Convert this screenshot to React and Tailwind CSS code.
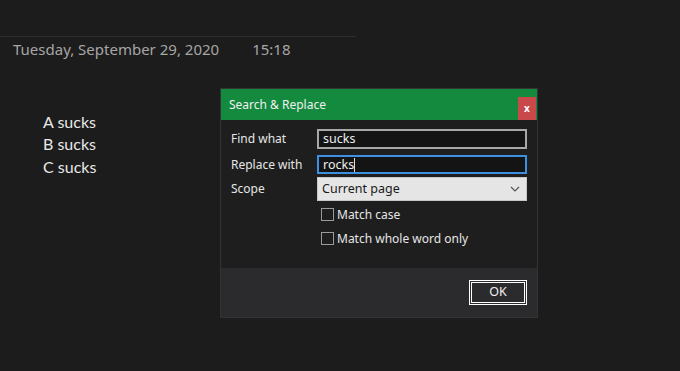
import React from 'react';

const ui = { fontFamily: '"Noto Sans", "Open Sans", sans-serif' };

function Check({ label }) {
  return (
    <label className="flex items-center h-[13px] gap-[3px] text-[12px] text-[#e6e6e6]">
      <span className="w-[13px] h-[13px] border border-[#9a9a9a] bg-[#1e1e1e]" />
      {label}
    </label>
  );
}

function Row({ label, children, className = '' }) {
  return (
    <div className={`flex items-center ${className}`}>
      <div className="w-[86px] text-[12px] text-[#e6e6e6]">{label}</div>
      {children}
    </div>
  );
}

const SearchDialog = () => (
  <div className="absolute left-[220px] top-[88px] w-[318px] h-[230px] border border-[#333333] bg-[#1e1e1e] flex flex-col" style={ui}>
    <div className="h-[31px] bg-[#138a3e] flex items-center justify-between pl-[8px] pr-[1px]">
      <span className="text-[12px] text-[#f0f0f0]">Search &amp; Replace</span>
      <button className="w-[18px] h-[23px] mt-[7px] bg-[#c9494b] text-white text-[10px] font-bold leading-none">x</button>
    </div>
    <div className="flex-1 flex flex-col pl-[10px] pr-[10px] pt-[9px]">
      <Row label="Find what">
        <div className="w-[210px] h-[20px] border-2 border-[#a8a8a8] bg-[#141414] text-[12.5px] text-[#eeeeee] leading-[16px] pl-[4px]">sucks</div>
      </Row>
      <Row label="Replace with" className="mt-[6px]">
        <div className="w-[210px] h-[19px] border-2 border-[#3d8fe0] bg-[#141414] text-[12.5px] text-[#eeeeee] leading-[15px] pl-[4px] flex items-center">
          rocks<span className="w-px h-[14px] bg-[#dddddd]" />
        </div>
      </Row>
      <Row label="Scope" className="mt-[3px]">
        <div className="w-[210px] h-[24px] border border-[#c8c8c8] bg-[#e5e5e5] text-[12.5px] text-[#1a1a1a] pl-[4px] pr-[6px] flex items-center justify-between">
          Current page
          <svg width="10" height="6" viewBox="0 0 10 6"><path d="M1 1l4 4 4-4" fill="none" stroke="#555" strokeWidth="1.2" /></svg>
        </div>
      </Row>
      <div className="pl-[90px] flex flex-col gap-[11px] pt-[7px]">
        <Check label="Match case" />
        <Check label="Match whole word only" />
      </div>
    </div>
    <div className="h-[49px] bg-[#2b2b2d] flex items-start justify-end pt-[12px] pr-[10px]">
      <button className="w-[58px] h-[25px] border border-white bg-[#2b2b2d] shadow-[inset_0_0_0_1px_#2b2b2d,inset_0_0_0_2px_#ffffff] text-[12.5px] text-[#eeeeee]">OK</button>
    </div>
  </div>
);

export default function App() {
  return (
    <div className="relative w-[680px] h-[371px] bg-[#1c1c1c] overflow-hidden">
      <div className="w-[356px] h-[37px] border-b border-[#2f2f2f]" />
      <div className="flex gap-[33px] pl-[13px] pt-[1px] text-[15px] text-[#a6a6a6]" style={ui}>
        <span>Tuesday, September 29, 2020</span>
        <span>15:18</span>
      </div>
      <div className="pl-[43px] pt-[50px] flex flex-col text-[16px] leading-[22.5px] text-[#e8e8e8]" style={{ fontFamily: 'Lato, "Noto Sans", sans-serif' }}>
        <span>A sucks</span>
        <span>B sucks</span>
        <span>C sucks</span>
      </div>
      <SearchDialog />
    </div>
  );
}
